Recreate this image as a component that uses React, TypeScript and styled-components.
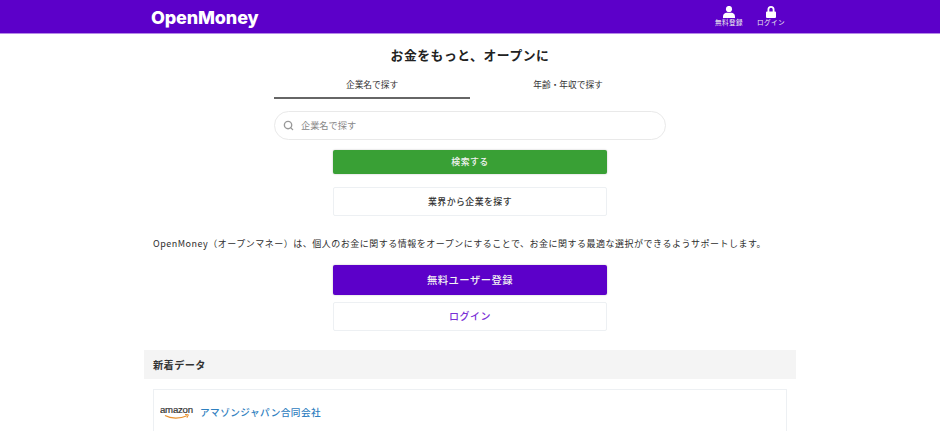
import React from 'react'
import styled, { createGlobalStyle } from 'styled-components'
import { FiSearch } from 'react-icons/fi'

const GlobalStyle = createGlobalStyle`
  html, body {
    margin: 0;
    height: 431px;
    overflow: hidden;
    background: #ffffff;
    color: #2e2e2e;
    font-family: "Noto Sans CJK JP", "Noto Sans", sans-serif;
  }
`

const Header = styled.header`
  height: 33px;
  background-color: #5c00c9;
  border-bottom: 1px solid #b58ae6;
`

const HeaderInner = styled.div`
  width: 652px;
  height: 100%;
  margin: 0 auto;
  display: flex;
  align-items: center;
  justify-content: space-between;
`

const Logo = styled.div`
  margin: 2px 0 0 7px;
  color: #ffffff;
  font-family: "Inter", sans-serif;
  font-size: 18px;
  font-weight: 800;
  letter-spacing: -0.15px;
`

const Nav = styled.nav`
  display: flex;
  gap: 14px;
  margin-right: 11px;
`

const NavItem = styled.a`
  display: flex;
  flex-direction: column;
  align-items: center;
  color: #eeeeee;
  font-size: 6.6px;
  line-height: 9px;
  letter-spacing: 0.4px;
`

const NavIcon = styled.svg`
  width: 12px;
  height: 12px;
  fill: #ffffff;
`

const Main = styled.main`
  width: 652px;
  margin: 0 auto;
`

const Title = styled.h1`
  margin: 11px 0 0;
  font-size: 12.8px;
  line-height: 20px;
  font-weight: 700;
  letter-spacing: 0.55px;
  text-align: center;
  color: #222222;
`

const Tabs = styled.div`
  width: 392px;
  margin: 7px auto 0;
  display: flex;
`

const Tab = styled.div<{ $active?: boolean }>`
  flex: 1;
  height: 27px;
  box-sizing: border-box;
  padding-top: 6px;
  text-align: center;
  font-size: 8.7px;
  line-height: 13px;
  color: #333333;
  border-bottom: 2px solid ${(p) => (p.$active ? '#666666' : 'transparent')};
`

const SearchBox = styled.div`
  width: 392px;
  height: 29px;
  box-sizing: border-box;
  margin: 12px auto 0;
  padding: 0 0 1px 8px;
  display: flex;
  align-items: center;
  gap: 7px;
  border: 1px solid #e9e9e9;
  border-radius: 15px;
  color: #888888;
  font-size: 9.2px;
`

const Button = styled.div<{ $variant: 'green' | 'purple' | 'plain' | 'link' }>`
  width: 274px;
  box-sizing: border-box;
  margin: 0 auto;
  padding-bottom: 2px;
  display: flex;
  align-items: center;
  justify-content: center;
  border-radius: 2px;
  letter-spacing: 0.45px;
  font-weight: 500;
  font-size: ${(p) => (p.$variant === 'purple' ? '10.3px' : p.$variant === 'link' ? '10px' : '8.9px')};
  color: ${(p) => (p.$variant === 'green' || p.$variant === 'purple' ? '#f2f2f2' : p.$variant === 'link' ? '#7a2fd6' : '#333333')};
  background: ${(p) => (p.$variant === 'green' ? '#39a035' : p.$variant === 'purple' ? '#5c00c9' : '#ffffff')};
  border: ${(p) => (p.$variant === 'green' || p.$variant === 'purple' ? 'none' : '1px solid #edf0f3')};
  box-shadow: ${(p) => (p.$variant === 'green' || p.$variant === 'purple' ? '0 0 2px rgba(0, 0, 0, 0.25)' : 'none')};
`

const SearchButton = styled(Button)`
  height: 24px;
  margin-top: 10px;
`

const IndustryButton = styled(Button)`
  height: 29px;
  margin-top: 13px;
  padding-bottom: 0;
`

const Lead = styled.p`
  margin: 20px 0 0;
  padding-left: 9px;
  font-size: 9px;
  line-height: 16px;
  letter-spacing: 0.5px;
  white-space: nowrap;
`

const SignupButton = styled(Button)`
  height: 30px;
  margin-top: 13px;
`

const LoginButton = styled(Button)`
  height: 29px;
  margin-top: 7px;
`

const SectionHead = styled.h2`
  margin: 19px 0 0;
  height: 29px;
  padding-left: 9px;
  display: flex;
  align-items: center;
  background: #f4f4f4;
  font-size: 10.2px;
  font-weight: 700;
  letter-spacing: 0.4px;
  color: #333333;
`

const Card = styled.div`
  margin: 10px 9px 0;
  height: 42px;
  box-sizing: border-box;
  padding: 13px 0 0 6px;
  display: flex;
  align-items: flex-start;
  gap: 6px;
  border: 1px solid #edf0f3;
  border-bottom: none;
`

const CompanyLogo = styled.svg`
  width: 34px;
  height: 16px;
  flex: none;
  margin-top: 1px;
`

const CompanyName = styled.a`
  color: #2f80c0;
  font-size: 9.6px;
  line-height: 18px;
  font-weight: 500;
  letter-spacing: 0.5px;
`

const App: React.FC = () => {
  return (
    <>
      <GlobalStyle />
      <Header>
        <HeaderInner>
          <Logo>OpenMoney</Logo>
          <Nav>
            <NavItem>
              <NavIcon viewBox="0 0 12 12">
                <circle cx="6" cy="3" r="3.1" />
                <path d="M0 12v-1.5C0 8 2 7 3.5 6.8h5C10 7 12 8 12 10.5V12z" />
              </NavIcon>
              無料登録
            </NavItem>
            <NavItem>
              <NavIcon viewBox="0 0 12 12">
                <path
                  fillRule="evenodd"
                  d="M2.5 5.5V3.5a3.5 3.5 0 017 0v2h.5a1 1 0 011 1V11a1 1 0 01-1 1H2a1 1 0 01-1-1V6.500a1 1 0 011-1zm1.800 0h3.400V3.500a1.700 1.700 0 00-3.400 0z"
                />
              </NavIcon>
              ログイン
            </NavItem>
          </Nav>
        </HeaderInner>
      </Header>
      <Main>
        <Title>お金をもっと、オープンに</Title>
        <Tabs>
          <Tab $active>企業名で探す</Tab>
          <Tab>年齢・年収で探す</Tab>
        </Tabs>
        <SearchBox>
          <FiSearch size={11} strokeWidth={3} color="#999999" />
          企業名で探す
        </SearchBox>
        <SearchButton $variant="green">検索する</SearchButton>
        <IndustryButton $variant="plain">業界から企業を探す</IndustryButton>
        <Lead>
          OpenMoney（オープンマネー）は、個人のお金に関する情報をオープンにすることで、お金に関する最適な選択ができるようサポートします。
        </Lead>
        <SignupButton $variant="purple">無料ユーザー登録</SignupButton>
        <LoginButton $variant="link">ログイン</LoginButton>
        <SectionHead>新着データ</SectionHead>
        <Card>
          <CompanyLogo viewBox="0 0 34 16">
            <text x="0" y="9" fontSize="9.6" fontWeight="400" fontFamily="Liberation Sans, sans-serif" fill="#333333" textLength="33" stroke="#333333" strokeWidth="0.2">
              amazon
            </text>
            <path d="M5 11.5c6 3.4 15 3.4 22 .2" fill="none" stroke="#e8912d" strokeWidth="1.2" />
            <path d="M25 10.4l3.4.4-1.4 3" fill="none" stroke="#e8912d" strokeWidth="1" />
          </CompanyLogo>
          <CompanyName>アマゾンジャパン合同会社</CompanyName>
        </Card>
      </Main>
    </>
  )
}

export default App
